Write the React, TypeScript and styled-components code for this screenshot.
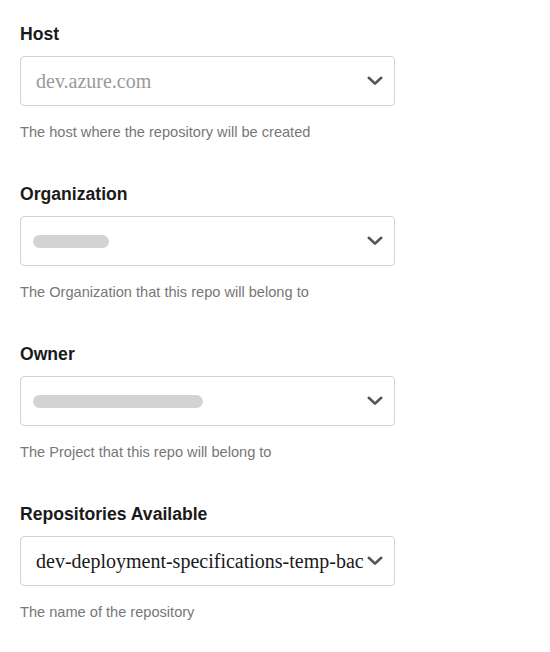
import React from 'react';
import styled, { createGlobalStyle } from 'styled-components';

const GlobalStyle = createGlobalStyle`
  body {
    margin: 0;
    background: #ffffff;
    font-family: "Liberation Sans", Arial, sans-serif;
  }
`;

interface FieldData {
  label: string;
  value?: string;
  muted?: boolean;
  redactWidth?: number;
  helper: string;
}

const fields: FieldData[] = [
  {
    label: 'Host',
    value: 'dev.azure.com',
    muted: true,
    helper: 'The host where the repository will be created',
  },
  {
    label: 'Organization',
    redactWidth: 76,
    helper: 'The Organization that this repo will belong to',
  },
  {
    label: 'Owner',
    redactWidth: 170,
    helper: 'The Project that this repo will belong to',
  },
  {
    label: 'Repositories Available',
    value: 'dev-deployment-specifications-temp-bac',
    helper: 'The name of the repository',
  },
];

const Chevron: React.FC = () => (
  <ChevronIcon width="16" height="10" viewBox="0 0 16 10">
    <path
      d="M1.8 1.8 L8 7.6 L14.2 1.8"
      fill="none"
      stroke="#555"
      strokeWidth="2.6"
      strokeLinecap="round"
      strokeLinejoin="round"
    />
  </ChevronIcon>
);

const App: React.FC = () => {
  return (
    <>
      <GlobalStyle />
      <Form>
        {fields.map((field) => (
          <Field key={field.label}>
            <Label>{field.label}</Label>
            <SelectBox>
              {field.redactWidth ? (
                <Redacted style={{ width: field.redactWidth }} />
              ) : (
                <SelectValue $muted={field.muted}>{field.value}</SelectValue>
              )}
              <Chevron />
            </SelectBox>
            <Helper>{field.helper}</Helper>
          </Field>
        ))}
      </Form>
    </>
  );
};

const Form = styled.div`
  display: flex;
  flex-direction: column;
  padding: 23px 20px 0 20px;
  width: 375px;
`;
const Field = styled.div`
  display: flex;
  flex-direction: column;
  height: 160px;
`;
const Label = styled.div`
  font-size: 17.6px;
  line-height: 22px;
  font-weight: 700;
  color: #1a1a1a;
  margin-bottom: 11px;
`;
const SelectBox = styled.div`
  display: flex;
  align-items: center;
  box-sizing: border-box;
  height: 50px;
  padding: 0 11px 0 15px;
  border: 1px solid #d2d2d7;
  border-radius: 4px;
  background: #fff;
`;
const SelectValue = styled.span<{ $muted?: boolean }>`
  flex: 1;
  min-width: 0;
  white-space: nowrap;
  font-family: "Liberation Serif", "Times New Roman", serif;
  font-size: 20px;
  color: ${(p) => (p.$muted ? '#9a9a9a' : '#1a1a1a')};
`;
const Redacted = styled.div`
  height: 13px;
  margin-left: -3px;
  margin-right: auto;
  border-radius: 7px;
  background: #d3d3d4;
  filter: blur(0.6px);
`;
const ChevronIcon = styled.svg`
  flex-shrink: 0;
  margin-left: 2px;
`;
const Helper = styled.div`
  margin-top: 18px;
  font-size: 14.6px;
  line-height: 17px;
  color: #777777;
`;

export default App;
